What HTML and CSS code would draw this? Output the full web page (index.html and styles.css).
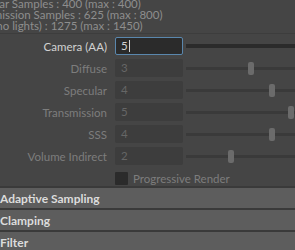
FILE: index.html
```html
<!DOCTYPE html>
<html lang="en">
<head>
  <meta charset="UTF-8">
  <title>Sampling</title>
  <link rel="stylesheet" href="styles.css">
</head>
<body>
  <div class="stats">
    <div>Specular Samples : 400 (max : 400)</div>
    <div>Transmission Samples : 625 (max : 800)</div>
    <div>Total (no lights) : 1275 (max : 1450)</div>
  </div>
  <div class="rows">
    <div class="row">
      <label>Camera (AA)</label>
      <div class="field active">5<span class="caret"></span></div>
      <div class="track main"></div>
    </div>
    <div class="row off">
      <label>Diffuse</label>
      <div class="field">3</div>
      <div class="track"><span class="knob" style="left: 62px"></span></div>
    </div>
    <div class="row off">
      <label>Specular</label>
      <div class="field">4</div>
      <div class="track"><span class="knob" style="left: 83px"></span></div>
    </div>
    <div class="row off">
      <label>Transmission</label>
      <div class="field">5</div>
      <div class="track"><span class="knob" style="left: 102px"></span></div>
    </div>
    <div class="row off">
      <label>SSS</label>
      <div class="field">4</div>
      <div class="track"><span class="knob" style="left: 83px"></span></div>
    </div>
    <div class="row off">
      <label>Volume Indirect</label>
      <div class="field">2</div>
      <div class="track"><span class="knob" style="left: 42px"></span></div>
    </div>
    <div class="check">
      <span class="box"></span>
      <span>Progressive Render</span>
    </div>
  </div>
  <div class="frame">Adaptive Sampling</div>
  <div class="frame">Clamping</div>
  <div class="frame">Filter</div>
</body>
</html>
```
FILE: styles.css
```css
body {
  margin: 0;
  width: 295px;
  height: 250px;
  overflow: hidden;
  background: #454545;
  font-family: Lato, "Liberation Sans", sans-serif;
  font-size: 11.5px;
  color: #d2d2d2;
}
.stats {
  margin-top: -2px;
  margin-left: -34px;
  padding-bottom: 2px;
  line-height: 11px;
  color: #8e8e8e;
  white-space: nowrap;
  border-bottom: 1px solid #3d3d3d;
}
.rows {
  padding-top: 3px;
}
.row {
  display: flex;
  align-items: center;
  height: 18px;
  margin-bottom: 4px;
}
.row label {
  width: 107px;
  flex: none;
  text-align: right;
  margin-right: 8px;
}
.field {
  width: 68px;
  height: 18px;
  flex: none;
  box-sizing: border-box;
  padding-left: 6px;
  line-height: 18px;
  background: #3d3d3d;
  border-radius: 2px;
  color: #666;
}
.field.active {
  background: #2b2b2b;
  border: 1px solid #5a87ad;
  padding-left: 5px;
  line-height: 16px;
  color: #d4d4d4;
}
.caret {
  display: inline-block;
  width: 1px;
  height: 12px;
  margin-left: 1px;
  vertical-align: -2px;
  background: #d4d4d4;
}
.off label {
  color: #7d7d7d;
}
.track {
  position: relative;
  flex: none;
  width: 220px;
  height: 3px;
  margin-left: 3px;
  background: #3a3a3a;
}
.track.main {
  height: 4px;
  background: #2b2b2b;
}
.knob {
  position: absolute;
  top: -5px;
  width: 6px;
  height: 13px;
  border-radius: 2px;
  background: #6b6b6b;
}
.check {
  display: flex;
  align-items: center;
  gap: 5px;
  padding-left: 115px;
  margin-top: 7px;
  height: 13px;
  color: #7d7d7d;
}
.box {
  width: 13px;
  height: 13px;
  background: #2b2b2b;
  border-radius: 1px;
}
.frame {
  height: 20px;
  line-height: 21px;
  border-top: 2px solid #3a3a3a;
  background: #5d5d5d;
  color: #dcdcdc;
  font-size: 12px;
  font-weight: bold;
}
.rows + .frame {
  margin-top: 1px;
}
```
